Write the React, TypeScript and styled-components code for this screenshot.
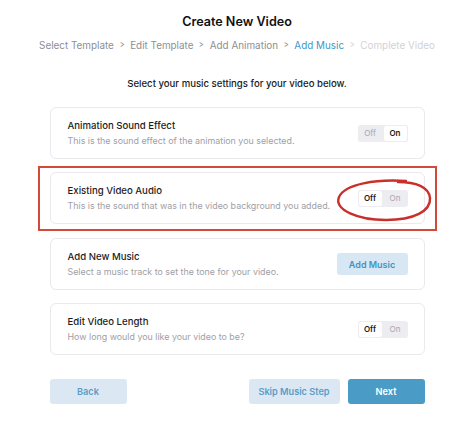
import styled, { createGlobalStyle } from 'styled-components';

const GlobalStyle = createGlobalStyle`
  body {
    margin: 0;
    background: #ffffff;
    font-family: 'Inter', 'Liberation Sans', sans-serif;
    color: #1c1c1e;
  }
`;

type Step = { label: string; state: 'done' | 'current' | 'todo' };

const steps: Step[] = [
  { label: 'Select Template', state: 'done' },
  { label: 'Edit Template', state: 'done' },
  { label: 'Add Animation', state: 'done' },
  { label: 'Add Music', state: 'current' },
  { label: 'Complete Video', state: 'todo' },
];

const Toggle = ({ on }: { on: boolean }) => (
  <Switch>
    <Seg $active={!on}>Off</Seg>
    <Seg $active={on}>On</Seg>
  </Switch>
);

const Scribble = () => (
  <Circle width="96" height="42" viewBox="0 0 96 42">
    <path
      d="M70 2 C40 0 9 5 3 18 C-2 31 22 41 50 41 C78 41 95 32 94 19 C93 8 80 3 62 3"
      fill="none"
      stroke="#c9302a"
      strokeWidth="2.4"
      strokeLinecap="round"
    />
  </Circle>
);

const App = () => {
  return (
    <>
      <GlobalStyle />
      <Page>
        <Title>Create New Video</Title>
        <Crumbs>
          {steps.map((s, i) => (
            <Crumb key={s.label}>
              <CrumbText $state={s.state}>{s.label}</CrumbText>
              {i < steps.length - 1 && (
                <Chevron $faded={s.state === 'current'}>&gt;</Chevron>
              )}
            </Crumb>
          ))}
        </Crumbs>
        <Lead>Select your music settings for your video below.</Lead>

        <List>
          <Card>
            <Info>
              <CardTitle>Animation Sound Effect</CardTitle>
              <CardDesc>This is the sound effect of the animation you selected.</CardDesc>
            </Info>
            <Toggle on />
          </Card>

          <Highlight>
            <Card>
              <Info>
                <CardTitle>Existing Video Audio</CardTitle>
                <CardDesc>This is the sound that was in the video background you added.</CardDesc>
              </Info>
              <Toggle on={false} />
              <Scribble />
            </Card>
          </Highlight>

          <Card>
            <Info>
              <CardTitle>Add New Music</CardTitle>
              <CardDesc>Select a music track to set the tone for your video.</CardDesc>
            </Info>
            <SmallButton>Add Music</SmallButton>
          </Card>

          <Card>
            <Info>
              <CardTitle>Edit Video Length</CardTitle>
              <CardDesc>How long would you like your video to be?</CardDesc>
            </Info>
            <Toggle on={false} />
          </Card>
        </List>

        <Actions>
          <Button $w={77}>Back</Button>
          <Spacer />
          <Button $w={91}>Skip Music Step</Button>
          <Button $w={77} $primary>Next</Button>
        </Actions>
      </Page>
    </>
  );
};
export default App;

const Page = styled.div`
  width: 375px;
  margin: 0 auto;
  padding-top: 14px;
  display: flex;
  flex-direction: column;
  align-items: center;
`;

const Title = styled.div`
  font-size: 12.6px;
  font-weight: 600;
  line-height: 16px;
  color: #111;
`;

const Crumbs = styled.div`
  margin-top: 8px;
  display: flex;
  align-items: center;
  white-space: nowrap;
  gap: 5px;
`;

const Crumb = styled.div`
  display: flex;
  align-items: center;
  gap: 5px;
`;

const CrumbText = styled.span<{ $state: string }>`
  font-size: 9.9px;
  line-height: 14px;
  color: ${(p) =>
    p.$state === 'current' ? '#3f97c3' : p.$state === 'todo' ? '#d2d2d7' : '#8e8e93'};
`;

const Chevron = styled.span<{ $faded?: boolean }>`
  font-size: 9.5px;
  line-height: 14px;
  color: ${(p) => (p.$faded ? '#d2d2d7' : '#8e8e93')};
  transform: scaleX(0.8);
`;

const Lead = styled.div`
  margin-top: 25px;
  font-size: 9.6px;
  font-weight: 500;
  line-height: 14px;
  color: #1a1a1a;
`;

const List = styled.div`
  margin-top: 16px;
  width: 100%;
  display: flex;
  flex-direction: column;
  gap: 7px;
`;

const Highlight = styled.div`
  margin: 0 -12px;
  padding: 4px 10px 5px;
  border: 2px solid #d44a3a;
`;

const Card = styled.div`
  position: relative;
  box-sizing: border-box;
  height: 52px;
  padding: 0 16px 0 17px;
  border: 1px solid #e9e9ee;
  border-radius: 6px;
  display: flex;
  align-items: center;
  justify-content: space-between;
  & + & {
    margin-top: 6px;
  }
`;

const Info = styled.div`
  display: flex;
  flex-direction: column;
  gap: 3px;
  white-space: nowrap;
`;

const CardTitle = styled.div`
  font-size: 9.6px;
  font-weight: 500;
  line-height: 13px;
  color: #1c1c1e;
`;

const CardDesc = styled.div`
  font-size: 8.9px;
  line-height: 12px;
  color: #a0a0a6;
`;

const Switch = styled.div`
  width: 50px;
  height: 17px;
  box-sizing: border-box;
  background: #ececf1;
  border-radius: 3px;
  display: flex;
`;

const Seg = styled.div<{ $active: boolean }>`
  flex: 1;
  display: flex;
  align-items: center;
  justify-content: center;
  font-size: 8px;
  font-weight: ${(p) => (p.$active ? 600 : 400)};
  color: ${(p) => (p.$active ? '#1c1c1e' : '#a6a6ad')};
  background: ${(p) => (p.$active ? '#ffffff' : 'transparent')};
  border: 1px solid ${(p) => (p.$active ? '#ececf1' : 'transparent')};
  border-radius: 3px;
`;

const SmallButton = styled.div`
  width: 71px;
  height: 22px;
  border-radius: 3px;
  background: #d7e7f4;
  color: #3f93c1;
  font-size: 9px;
  font-weight: 600;
  display: flex;
  align-items: center;
  justify-content: center;
`;

const Circle = styled.svg`
  position: absolute;
  left: 285px;
  top: 6px;
  overflow: visible;
  pointer-events: none;
`;

const Actions = styled.div`
  margin-top: 24px;
  width: 100%;
  display: flex;
  gap: 8px;
`;

const Spacer = styled.div`
  flex: 1;
`;

const Button = styled.div<{ $w: number; $primary?: boolean }>`
  width: ${(p) => p.$w}px;
  height: 25px;
  border-radius: 3px;
  background: ${(p) => (p.$primary ? '#4a9bc5' : '#dbe8f4')};
  color: ${(p) => (p.$primary ? '#ffffff' : '#5b9dc6')};
  font-size: 9.2px;
  font-weight: 600;
  display: flex;
  align-items: center;
  justify-content: center;
`;
